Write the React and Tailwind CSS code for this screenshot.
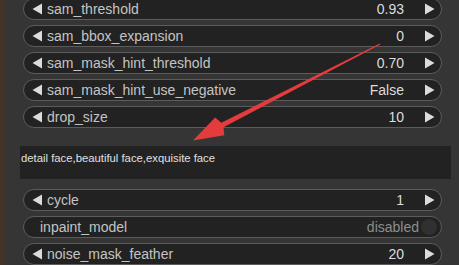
import React from "react";

const rows1 = [
  { label: "sam_threshold", value: "0.93" },
  { label: "sam_bbox_expansion", value: "0" },
  { label: "sam_mask_hint_threshold", value: "0.70" },
  { label: "sam_mask_hint_use_negative", value: "False" },
  { label: "drop_size", value: "10" },
];

function LeftArrow() {
  return (
    <svg width="11" height="12" viewBox="0 0 11 12" className="shrink-0">
      <path d="M10 0.5 L10 11.5 L0.5 6 Z" fill="#dcdcdc" />
    </svg>
  );
}

function RightArrow() {
  return (
    <svg width="11" height="12" viewBox="0 0 11 12" className="shrink-0">
      <path d="M1 0.5 L1 11.5 L10.5 6 Z" fill="#dcdcdc" />
    </svg>
  );
}

function NumberWidget({ label, value, first }) {
  return (
    <div
      className={
        "h-[22px] rounded-full border border-[#5c5c5c] bg-[#222222] flex items-center pl-[8px] pr-[6px] " +
        (first ? "mt-[-2px]" : "")
      }
    >
      <LeftArrow />
      <span className="ml-[4px] text-[#c4c4c4] flex-1">{label}</span>
      <span className="text-[#dcdcdc] mr-[20px]">{value}</span>
      <RightArrow />
    </div>
  );
}

export default function App() {
  return (
    <div
      className="relative w-[459px] h-[265px] overflow-hidden bg-[#353535] flex"
      style={{ fontFamily: '"Liberation Sans", Arial, sans-serif' }}
    >
      <div className="w-[6px] shrink-0 bg-gradient-to-r from-[#4a3322] to-[#383330]" />
      <div className="flex-1 flex flex-col pl-[14px] pr-[8px] text-[14px]">
        <div className="flex flex-col gap-[5px] pl-[3px] pr-[9px]">
          {rows1.map((r, i) => (
            <NumberWidget key={r.label} label={r.label} value={r.value} first={i === 0} />
          ))}
        </div>
        <div className="mt-[18px] h-[34px] bg-[#222222] px-[1px] pt-[4px] text-[11.3px] text-[#e0e0e0]">
          detail face,beautiful face,exquisite face
        </div>
        <div className="mt-[10px] flex flex-col gap-[5px] pl-[3px] pr-[9px]">
          <NumberWidget label="cycle" value="1" />
          <div className="h-[22px] rounded-full border border-[#5c5c5c] bg-[#222222] flex items-center pl-[16px] pr-[4px]">
            <span className="text-[#c4c4c4] flex-1">inpaint_model</span>
            <span className="text-[#8e8e8e] mr-[2px]">disabled</span>
            <span className="w-[16px] h-[16px] rounded-full bg-[#303030]" />
          </div>
          <NumberWidget label="noise_mask_feather" value="20" />
        </div>
      </div>
      <svg
        className="absolute left-0 top-0 pointer-events-none"
        width="459"
        height="265"
        viewBox="0 0 459 265"
      >
        <polygon
          points="379.8,43.4 221.3,122.7 215.1,117.4 193,140.5 224.3,135.2 223.5,127.2 380.3,44.6"
          fill="#e43c3c"
        />
      </svg>
    </div>
  );
}
